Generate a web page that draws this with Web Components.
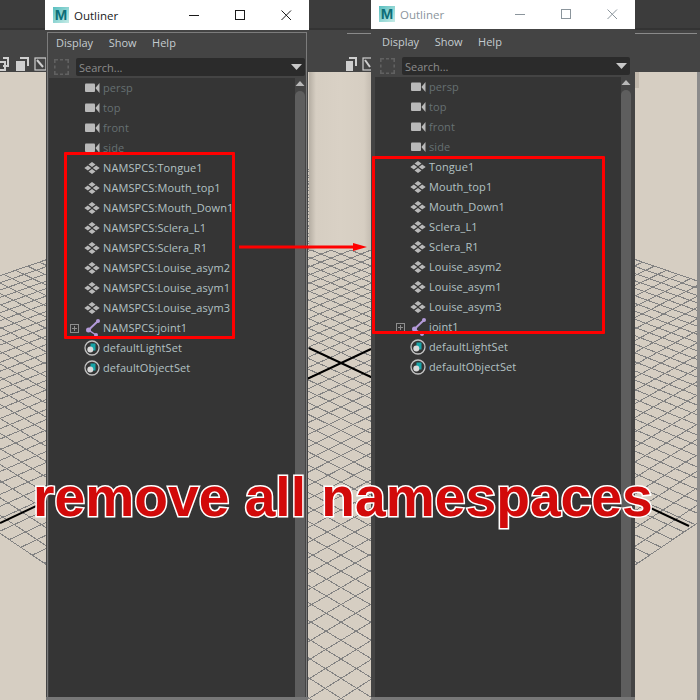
<!DOCTYPE html>
<html>
<head>
<meta charset="utf-8">
<title>Outliner</title>
<style>
  html, body { margin: 0; padding: 0; background: #d6cec2; }
  body { width: 700px; height: 700px; overflow: hidden; position: relative; font-family: "Open Sans", "Liberation Sans", sans-serif; }
</style>
</head>
<body>
<maya-viewport></maya-viewport>

<outliner-window framed style="left:45px" data-title="Outliner">
  <outliner-row icon="camera" dim>persp</outliner-row>
  <outliner-row icon="camera" dim>top</outliner-row>
  <outliner-row icon="camera" dim>front</outliner-row>
  <outliner-row icon="camera" dim>side</outliner-row>
  <outliner-row icon="mesh">NAMSPCS:Tongue1</outliner-row>
  <outliner-row icon="mesh">NAMSPCS:Mouth_top1</outliner-row>
  <outliner-row icon="mesh">NAMSPCS:Mouth_Down1</outliner-row>
  <outliner-row icon="mesh">NAMSPCS:Sclera_L1</outliner-row>
  <outliner-row icon="mesh">NAMSPCS:Sclera_R1</outliner-row>
  <outliner-row icon="mesh">NAMSPCS:Louise_asym2</outliner-row>
  <outliner-row icon="mesh">NAMSPCS:Louise_asym1</outliner-row>
  <outliner-row icon="mesh">NAMSPCS:Louise_asym3</outliner-row>
  <outliner-row icon="joint" expandable>NAMSPCS:joint1</outliner-row>
  <outliner-row icon="set">defaultLightSet</outliner-row>
  <outliner-row icon="set">defaultObjectSet</outliner-row>
</outliner-window>

<outliner-window inactive style="left:371px" data-title="Outliner">
  <outliner-row icon="camera" dim>persp</outliner-row>
  <outliner-row icon="camera" dim>top</outliner-row>
  <outliner-row icon="camera" dim>front</outliner-row>
  <outliner-row icon="camera" dim>side</outliner-row>
  <outliner-row icon="mesh">Tongue1</outliner-row>
  <outliner-row icon="mesh">Mouth_top1</outliner-row>
  <outliner-row icon="mesh">Mouth_Down1</outliner-row>
  <outliner-row icon="mesh">Sclera_L1</outliner-row>
  <outliner-row icon="mesh">Sclera_R1</outliner-row>
  <outliner-row icon="mesh">Louise_asym2</outliner-row>
  <outliner-row icon="mesh">Louise_asym1</outliner-row>
  <outliner-row icon="mesh">Louise_asym3</outliner-row>
  <outliner-row icon="joint" expandable>joint1</outliner-row>
  <outliner-row icon="set">defaultLightSet</outliner-row>
  <outliner-row icon="set">defaultObjectSet</outliner-row>
</outliner-window>

<red-box style="left:64px;top:152px;width:165px;height:181px"></red-box>
<red-box style="left:372px;top:156px;width:227px;height:172px"></red-box>
<red-arrow></red-arrow>
<big-caption style="left:33px;top:467px">remove all namespaces</big-caption>

<script>
// Grid floor + the dark Maya chrome behind the windows
class MayaViewport extends HTMLElement {
  constructor() {
    super();
    this.attachShadow({ mode: 'open' });
  }

  connectedCallback() {
    this.shadowRoot.innerHTML = `
      <style>
        :host { display: flex; flex-direction: column; width: 700px; height: 700px; }
        .top { height: 72px; background: #444; display: flex; flex-direction: column; flex: none; }
        .bar { height: 28px; background: #3c3c3c; flex: none; }
        .sep { height: 2px; background: #333; flex: none; }
        .rule { height: 1px; margin: 3px 3px 0 347px; background: #8a8a8a; flex: none; }
        .tools { margin-top: auto; height: 17px; display: flex; align-items: center; }
        .tools svg { display: block; flex: none; }
        .floor { position: relative; flex: 1; background: #d6cec2; overflow: hidden; }
        .floor svg { position: absolute; left: 0; top: 0; }
        .patch { position: absolute; left: 309px; top: 0; width: 62px; height: 178px;
          background: linear-gradient(90deg, #b5aea3 0, #d6cec2 7px, #d9d1c5 50%, #d6cec2 55px, #c4bcb1 100%); }
        .patch2 { position: absolute; left: 635px; top: 0; width: 4px; height: 16px; background: #c2b9ad; }
        .edge { position: absolute; right: 0; top: 0; bottom: 0; width: 3px; background: #8b8b8b; }
      </style>
      <div class="top">
        <div class="bar"></div>
        <div class="sep"></div>
        <div class="rule"></div>
        <div class="tools">
          <svg width="9" height="14" viewBox="0 0 9 14" fill="none" stroke="#d0d0d0" stroke-width="2"><path d="M3 1h5v8h-5M0 5h5v8h-5"/></svg>
          <svg width="14" height="14" viewBox="0 0 14 14" style="margin-left:7px" fill="#cfcfcf"><path d="M4 0h9v9h-2V2H4z"/><rect x="0" y="4" width="9" height="10"/></svg>
          <svg width="13" height="14" viewBox="0 0 13 14" style="margin-left:4px" fill="none" stroke="#cfcfcf" stroke-width="1.2"><rect x="1" y="1" width="11" height="12"/><path d="M3 3l6 7" stroke-width="2"/></svg>
          <svg width="11" height="14" viewBox="0 0 11 14" style="margin-left:299px" fill="#cfcfcf"><path d="M3 0h8v9H9V2H3z"/><rect x="0" y="4" width="7" height="10"/></svg>
          <svg width="11" height="14" viewBox="0 0 11 14" style="margin-left:5px" fill="none" stroke="#cfcfcf" stroke-width="1.2"><rect x="1" y="1" width="9.5" height="12"/><path d="M3 3l5 7" stroke-width="2"/></svg>
        </div>
      </div>
      <div class="floor">
        <svg id="grid" width="700" height="628" viewBox="0 72 700 628" shape-rendering="crispEdges"></svg>
        <div class="patch"></div>
        <div class="patch2"></div>
        <div class="edge"></div>
      </div>
    `;
    this.drawGrid();
  }

  // square [0,1]^2 projected on the kite T, R, B, L
  drawGrid() {
    const T = [341, 158], R = [935, 363], B = [341, 763], L = [-253, 363];
    const dx1 = R[0] - B[0], dx2 = L[0] - B[0], sx = T[0] - R[0] + B[0] - L[0];
    const dy1 = R[1] - B[1], dy2 = L[1] - B[1], sy = T[1] - R[1] + B[1] - L[1];
    const den = dx1 * dy2 - dx2 * dy1;
    const g = (sx * dy2 - dx2 * sy) / den;
    const h = (dx1 * sy - sx * dy1) / den;
    const project = (u, v) => {
      const w = g * u + h * v + 1;
      return [
        ((R[0] - T[0] + g * R[0]) * u + (L[0] - T[0] + h * L[0]) * v + T[0]) / w,
        ((R[1] - T[1] + g * R[1]) * u + (L[1] - T[1] + h * L[1]) * v + T[1]) / w
      ];
    };
    const cells = 52;
    let out = '';
    for (let i = 0; i <= cells; i++) {
      const t = i / cells;
      const a = project(t, 0), b = project(t, 1), c = project(0, t), d = project(1, t);
      out += `<line x1="${a[0]}" y1="${a[1]}" x2="${b[0]}" y2="${b[1]}"/>`;
      out += `<line x1="${c[0]}" y1="${c[1]}" x2="${d[0]}" y2="${d[1]}"/>`;
    }
    const svg = this.shadowRoot.getElementById('grid');
    svg.innerHTML = `
      <g stroke="#828282" stroke-width="1">${out}</g>
      <g stroke="#000" stroke-width="2" shape-rendering="auto">
        <line x1="0" y1="523" x2="371" y2="349"/>
        <line x1="309" y1="348" x2="689" y2="526"/>
      </g>`;
  }
}
customElements.define('maya-viewport', MayaViewport);

const windowTemplate = document.createElement('template');
windowTemplate.innerHTML = `
  <style>
    :host { position: absolute; top: 0; width: 264px; height: 700px; display: flex; flex-direction: column; color: #c4ccd0; font-size: 11px; }
    .title { height: 30px; flex: none; background: #fff; display: flex; align-items: center; padding-left: 8px; color: #1a1a1a; font: 11.5px "Open Sans", "Liberation Sans", sans-serif; }
    :host([inactive]) .title { height: 29px; color: #8b959c; }
    .title .name { margin-left: 5px; flex: 1; }
    .title svg { display: block; flex: none; }
    .logo { margin-top: -1px; }
    .btn { width: 46px; display: flex; justify-content: center; }
    .btns { display: flex; }
    .body { flex: 1; background: #444; display: flex; flex-direction: column; min-height: 0; }
    .inner { flex: 1; display: flex; flex-direction: column; min-height: 0; padding: 0 4px; }
    :host([framed]) .body { margin: 0 1px; padding: 2px 1px 0; }
    :host([framed]) .inner { border: 1px solid #7c7c7c; border-bottom: 0; padding: 0 0 0 1px; }
    .menu { height: 24px; box-sizing: border-box; padding: 0 0 6px 7px; flex: none; display: flex; gap: 15.5px; align-items: center; }
    :host([inactive]) .menu { height: 27px; padding-bottom: 3px; }
    .search { display: flex; height: 18px; flex: none; margin: 1px 0 2px; align-items: center; }
    .frame { margin-left: 5px; flex: none; display: block; }
    .field { margin-left: 7px; flex: 1; height: 18px; background: #2b2b2b; border-radius: 2px; display: flex; align-items: center; padding: 0 3px; color: #8c8c8c; margin-right: 1px; }
    .field span { flex: 1; }
    .pane { flex: 1; display: flex; min-height: 0; }
    .tree { flex: 1; background: #353535; min-width: 0; overflow: hidden; }
    .scroll { width: 10px; flex: none; display: flex; flex-direction: column; align-items: center; background: #444; }
    :host([framed]) .scroll { width: 11px; align-items: flex-start; }
    .arrow { height: 13px; flex: none; display: block; }
    .thumb { flex: 1; width: 10px; background: #5e5e5e; border-radius: 5px 5px 0 0; }
    .foot { height: 3px; flex: none; background: #777; }
    :host([framed]) .foot { margin: 0 1px; }
  </style>
  <div class="title">
    <svg class="logo" width="16" height="16" viewBox="0 0 16 16">
      <defs><linearGradient id="lg" x1="0" y1="0" x2="1" y2="1"><stop offset="0" stop-color="#59bfc0"/><stop offset="1" stop-color="#c6ebe6"/></linearGradient></defs>
      <rect width="16" height="16" fill="url(#lg)"/>
      <text x="8" y="13" text-anchor="middle" font-family="Liberation Sans, sans-serif" font-weight="700" font-size="15" fill="#0d6d78">M</text>
    </svg>
    <span class="name"></span>
    <div class="btns">
      <div class="btn"><svg width="11" height="11" viewBox="0 0 11 11"><path d="M0 5.500h10" stroke="currentColor"/></svg></div>
      <div class="btn"><svg width="11" height="11" viewBox="0 0 11 11"><rect x=".5" y=".5" width="9" height="9" fill="none" stroke="currentColor"/></svg></div>
      <div class="btn"><svg width="11" height="11" viewBox="0 0 11 11"><path d="M.5.5l9.500 9.500M10 .5L.5 10" stroke="currentColor"/></svg></div>
    </div>
  </div>
  <div class="body">
    <div class="inner">
      <div class="menu"><span>Display</span><span>Show</span><span>Help</span></div>
      <div class="search">
        <svg class="frame" width="15" height="16" viewBox="0 0 15 16" fill="none" stroke="#616161" stroke-width="1.6">
          <path d="M.8 4V.8H4M11 .8h3.2V4M14.2 12v3.2H11M4 15.200H.8V12M.8 6.500v3M14.200 6.500v3M6 .8h3M6 15.200h3"/>
        </svg>
        <div class="field"><span>Search...</span>
          <svg width="11" height="6" viewBox="0 0 11 6"><path d="M0 0h11L5.500 6z" fill="#c8c8c8"/></svg>
        </div>
      </div>
      <div class="pane">
        <div class="tree"><slot></slot></div>
        <div class="scroll">
          <svg class="arrow" width="10" height="13" viewBox="0 0 10 13"><path d="M5 3l4.500 5h-9z" fill="#b8b8b8"/></svg>
          <div class="thumb"></div>
        </div>
      </div>
    </div>
  </div>
  <div class="foot"></div>
`;

class OutlinerWindow extends HTMLElement {
  constructor() {
    super();
    this.attachShadow({ mode: 'open' });
    this.shadowRoot.appendChild(windowTemplate.content.cloneNode(true));
  }

  connectedCallback() {
    this.shadowRoot.querySelector('.name').textContent = this.dataset.title;
    // two windows on the page, so the logo gradient id has to differ
    const id = 'lg' + (this.hasAttribute('inactive') ? 'b' : 'a');
    this.shadowRoot.querySelector('linearGradient').id = id;
    this.shadowRoot.querySelector('.logo rect').setAttribute('fill', `url(#${id})`);
  }
}
customElements.define('outliner-window', OutlinerWindow);

const ICONS = {
  camera: `<svg width="15" height="10" viewBox="0 0 15 10" fill="#b9b9b9"><rect x="0" y=".5" width="10" height="8.500" rx="1"/><path d="M14.500 0v10L10.800 5.500V4.500z"/></svg>`,
  mesh: `<svg width="16" height="12" viewBox="0 0 16 12" fill="#b9b9b9"><path d="M8 0l3.500 2.500L8 5 4.500 2.500z"/><path d="M3.800 3.500L7.300 6 3.800 8.500.3 6z"/><path d="M12.200 3.500L15.700 6l-3.500 2.500L8.700 6z"/><path d="M8 7l3.500 2.500L8 12 4.500 9.500z"/></svg>`,
  joint: `<svg width="15" height="18" viewBox="0 0 15 18" fill="#b39ad9"><path d="M13 2L3.500 11" fill="none" stroke="#b39ad9" stroke-width="2"/><path d="M3.500 11L11 16" fill="none" stroke="#b39ad9" stroke-width="1.500"/><circle cx="13" cy="2" r="2"/><circle cx="3.500" cy="11" r="2.500"/><circle cx="11" cy="16" r="2"/></svg>`,
  set: `<svg width="16" height="16" viewBox="0 0 16 16"><circle cx="8" cy="8" r="7" fill="none" stroke="#c2c2c2" stroke-width="1.300"/><rect x="6.500" y="3.500" width="5" height="7" fill="#16a3a6"/><circle cx="6.300" cy="9.500" r="3" fill="#d9d9d9"/></svg>`
};

class OutlinerRow extends HTMLElement {
  constructor() {
    super();
    this.attachShadow({ mode: 'open' });
  }

  connectedCallback() {
    const plus = this.hasAttribute('expandable')
      ? `<svg width="9" height="9" viewBox="0 0 9 9"><rect x=".5" y=".5" width="8" height="8" fill="none" stroke="#8e8e8e"/><path d="M4.500 2v5M2 4.500h5" stroke="#8e8e8e"/></svg>`
      : '';
    this.shadowRoot.innerHTML = `
      <style>
        :host { display: flex; height: 20px; align-items: center; padding-left: 21px; color: #b3c2c4; font-size: 11px; letter-spacing: .1px; white-space: nowrap; }
        :host([dim]) { color: #667072; }
        .exp { width: 9px; height: 9px; flex: none; }
        .exp svg, .icon svg { display: block; }
        .icon { width: 16px; margin: 0 3px 0 5px; flex: none; display: flex; justify-content: center; }
        slot { display: block; margin-top: -2px; }
      </style>
      <div class="exp">${plus}</div>
      <div class="icon">${ICONS[this.getAttribute('icon')]}</div>
      <slot></slot>
    `;
  }
}
customElements.define('outliner-row', OutlinerRow);

class RedBox extends HTMLElement {
  constructor() {
    super();
    this.attachShadow({ mode: 'open' }).innerHTML = `
      <style>
        :host { position: absolute; display: block; border: 3px solid #f00; border-radius: 1px; }
      </style>`;
  }
}
customElements.define('red-box', RedBox);

class RedArrow extends HTMLElement {
  constructor() {
    super();
    this.attachShadow({ mode: 'open' }).innerHTML = `
      <style>
        :host { position: absolute; left: 239px; top: 242px; display: block; width: 128px; height: 10px; }
        svg { display: block; }
      </style>
      <svg width="128" height="10" viewBox="0 0 128 10"><path d="M0 3.500h114V1l14 4-14 4V6.500H0z" fill="#f00"/></svg>`;
  }
}
customElements.define('red-arrow', RedArrow);

class BigCaption extends HTMLElement {
  constructor() {
    super();
    this.attachShadow({ mode: 'open' }).innerHTML = `
      <style>
        :host { position: absolute; display: block; white-space: nowrap; font: 700 55.2px/60px "Liberation Sans", Arial, sans-serif; color: #d20a0a; -webkit-text-stroke: 3px #fff; paint-order: stroke fill; }
      </style>
      <slot></slot>`;
  }
}
customElements.define('big-caption', BigCaption);
</script>
</body>
</html>
